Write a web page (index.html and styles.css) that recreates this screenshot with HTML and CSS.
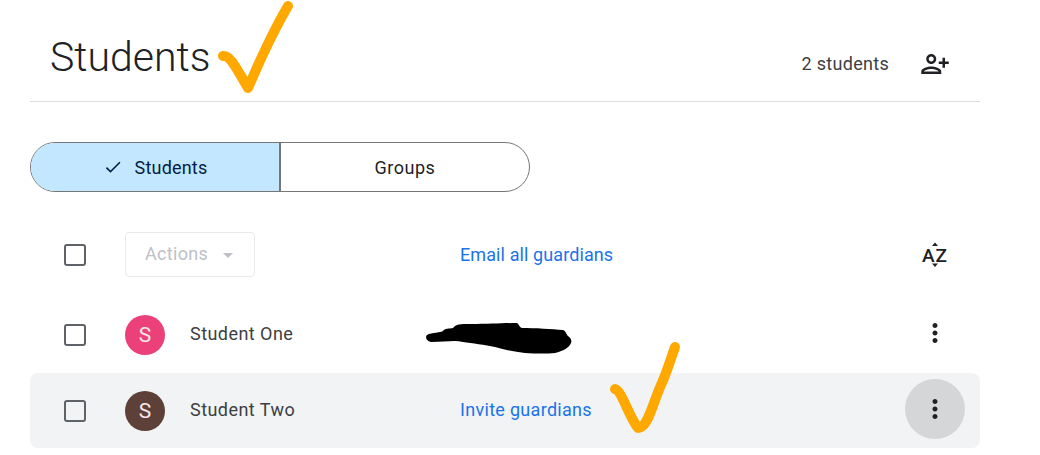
FILE: index.html
```html
<!DOCTYPE html>
<html lang="en">
<head>
    <meta charset="UTF-8">
    <title>Students</title>
    <link rel="stylesheet" href="styles.css">
</head>
<body>
    <div class="page">
        <header class="page-header">
            <h1>Students</h1>
            <div class="header-right">
                <span class="count">2 students</span>
                <svg class="icon-add" viewBox="0 0 24 24"><path d="M13 8c0-2.21-1.79-4-4-4S5 5.79 5 8s1.79 4 4 4 4-1.79 4-4zm-2 0c0 1.1-.9 2-2 2s-2-.9-2-2 .9-2 2-2 2 .9 2 2zM1 18v2h16v-2c0-2.66-5.33-4-8-4s-8 1.34-8 4zm2 0c.2-.71 3.3-2 6-2 2.69 0 5.78 1.28 6 2H3zm17-3v-3h3v-2h-3V7h-2v3h-3v2h3v3h2z"/></svg>
            </div>
        </header>

        <div class="toggle">
            <div class="toggle-item active">
                <svg class="icon-check" viewBox="0 0 24 24"><path d="M9 16.17 4.83 12l-1.42 1.41L9 19 21 7l-1.41-1.41z"/></svg>
                Students
            </div>
            <div class="toggle-item groups">Groups</div>
        </div>

        <div class="row toolbar">
            <span class="checkbox"></span>
            <div class="actions-col">
                <div class="actions"><span class="actions-label">Actions</span> <span class="caret"></span></div>
            </div>
            <a class="link">Email all guardians</a>
            <div class="row-action">
                <svg class="icon-sort" viewBox="0 0 30 30">
                    <polygon points="15,2.5 12,6 18,6"/>
                    <polygon points="15,27 12,23.5 18,23.5"/>
                    <text x="15" y="22" text-anchor="middle">AZ</text>
                </svg>
            </div>
        </div>

        <div class="row student">
            <span class="checkbox"></span>
            <div class="person">
                <span class="avatar pink">S</span>
                <span class="name">Student One</span>
            </div>
            <span class="guardian"></span>
            <div class="row-action raised">
                <svg class="icon-more" viewBox="0 0 24 24"><path d="M12 8c1.1 0 2-.9 2-2s-.9-2-2-2-2 .9-2 2 .9 2 2 2zm0 2c-1.1 0-2 .9-2 2s.9 2 2 2 2-.9 2-2-.9-2-2-2zm0 6c-1.1 0-2 .9-2 2s.9 2 2 2 2-.9 2-2-.9-2-2-2z"/></svg>
            </div>
        </div>

        <div class="row student hovered">
            <span class="checkbox"></span>
            <div class="person">
                <span class="avatar brown">S</span>
                <span class="name">Student Two</span>
            </div>
            <a class="link">Invite guardians</a>
            <div class="row-action raised">
                <svg class="icon-more" viewBox="0 0 24 24"><path d="M12 8c1.1 0 2-.9 2-2s-.9-2-2-2-2 .9-2 2 .9 2 2 2zm0 2c-1.1 0-2 .9-2 2s.9 2 2 2 2-.9 2-2-.9-2-2-2zm0 6c-1.1 0-2 .9-2 2s.9 2 2 2 2-.9 2-2-.9-2-2-2z"/></svg>
            </div>
        </div>
    </div>

    <!-- hand drawn marks on top of the screenshot -->
    <svg class="marks" viewBox="0 0 1040 455">
        <path class="tick" d="M223 56 C229 55 233 62 248 88 C256 70 268 40 288 6"/>
        <path class="tick" d="M615 389 C622 391 628 415 638 428 C648 428 652 405 661 385 C667 372 671 358 675 347"/>
        <path class="scribble" d="M427 335 C432 332 441 333 443 331 C445 328 449 329 453 328 C456 324 460 324 470 324 C490 324 505 323 517 323 C519 324 519 327 522 328 C535 328 552 329 563 330 C566 331 566 334 568 336 C571 338 572 341 571 343 C569 348 563 351 555 353 C545 354 535 353.5 525 353 C515 352 505 350 495 347 C485 345 472 343 463 342 C455 340 445 342 431 342 C426 341 425 337 427 335 Z"/>
    </svg>
</body>
</html>
```

FILE: styles.css
```css
body {
    margin: 0;
    background-color: #fff;
    color: #3c4043;
    font-family: Roboto, 'Liberation Sans', sans-serif;
    overflow: hidden;
}
.page {
    width: 950px;
    margin-left: 30px;
}
.page-header {
    height: 101px;
    padding: 0 30px 0 20px;
    display: flex;
    justify-content: space-between;
    border-bottom: 1px solid #dadce0;
}
.page-header h1 {
    margin: 32px 0 0;
    font-size: 41px;
    line-height: 50px;
    font-weight: 350;
    color: #202124;
}
.header-right {
    display: flex;
    align-items: center;
    gap: 31px;
    margin-top: 26px;
}
.count {
    font-size: 18px;
    letter-spacing: 0.3px;
    color: #3c4043;
}
.icon-add {
    width: 30px;
    height: 30px;
    fill: #202124;
}
.toggle {
    display: flex;
    width: 500px;
    height: 50px;
    margin: 40px 0 25px;
    box-sizing: border-box;
    border: 1px solid #747775;
    border-radius: 25px;
    overflow: hidden;
}
.toggle-item {
    flex: 1;
    display: flex;
    justify-content: center;
    align-items: center;
    gap: 12px;
    font-size: 18px;
    color: #1f1f1f;
}
.toggle-item.active {
    background-color: #c2e7ff;
    color: #041e49;
    letter-spacing: 0.2px;
    border-right: 2px solid #747775;
}
.toggle-item.groups {
    letter-spacing: 0.5px;
}
.icon-check {
    width: 20px;
    height: 20px;
    fill: #041e49;
}
.row {
    display: flex;
    align-items: center;
    height: 75px;
    padding: 0 15px 0 34px;
    border-radius: 8px;
}
.toolbar {
    margin-bottom: 5px;
}
.student {
    margin-bottom: 1px;
}
.hovered {
    background-color: #f1f3f4;
}
.checkbox {
    width: 22px;
    height: 22px;
    box-sizing: border-box;
    border: 2px solid #5f6368;
    border-radius: 3px;
    margin-right: 39px;
}
.actions-col,
.person {
    width: 335px;
    display: flex;
    align-items: center;
}
.actions {
    width: 130px;
    height: 45px;
    padding-left: 19px;
    box-sizing: border-box;
    border: 1px solid #e8eaed;
    border-radius: 4px;
    display: flex;
    align-items: center;
    font-size: 18px;
    letter-spacing: 0.3px;
    color: #bdc1c6;
}
.actions-label {
    margin-bottom: 2px;
}
.caret {
    margin: 2px 0 0 15px;
    border-top: 5px solid #bdc1c6;
    border-left: 5px solid transparent;
    border-right: 5px solid transparent;
}
.avatar {
    width: 40px;
    height: 40px;
    margin-right: 25px;
    border-radius: 50%;
    display: flex;
    justify-content: center;
    align-items: center;
    font-size: 21px;
    color: #f5e6ea;
}
.avatar.pink {
    background-color: #ec407a;
}
.avatar.brown {
    background-color: #5d4037;
}
.name {
    font-size: 18px;
    letter-spacing: 0.45px;
    margin-bottom: 2px;
    color: #3c4043;
}
.link {
    font-size: 18px;
    letter-spacing: 0.1px;
    color: #1a73e8;
}
.hovered .link {
    letter-spacing: 0.3px;
    margin-bottom: 2px;
}
.guardian {
    width: 0;
}
.row-action {
    margin-left: auto;
    width: 60px;
    height: 60px;
    border-radius: 50%;
    display: flex;
    justify-content: center;
    align-items: center;
}
.row-action.raised {
    margin-bottom: 3px;
}
.hovered .row-action {
    background-color: #d5d6d8;
}
.icon-more {
    width: 30px;
    height: 30px;
    fill: #202124;
}
.icon-sort {
    width: 30px;
    height: 30px;
    fill: #202124;
}
.icon-sort text {
    font-size: 19px;
    font-weight: 500;
    letter-spacing: 1px;
    font-family: Roboto, sans-serif;
}
.marks {
    position: absolute;
    top: 0;
    left: 0;
    width: 1040px;
    height: 455px;
    pointer-events: none;
}
.tick {
    fill: none;
    stroke: #ffa800;
    stroke-width: 10;
    stroke-linecap: round;
    stroke-linejoin: round;
}
.scribble {
    fill: #000;
}
```
